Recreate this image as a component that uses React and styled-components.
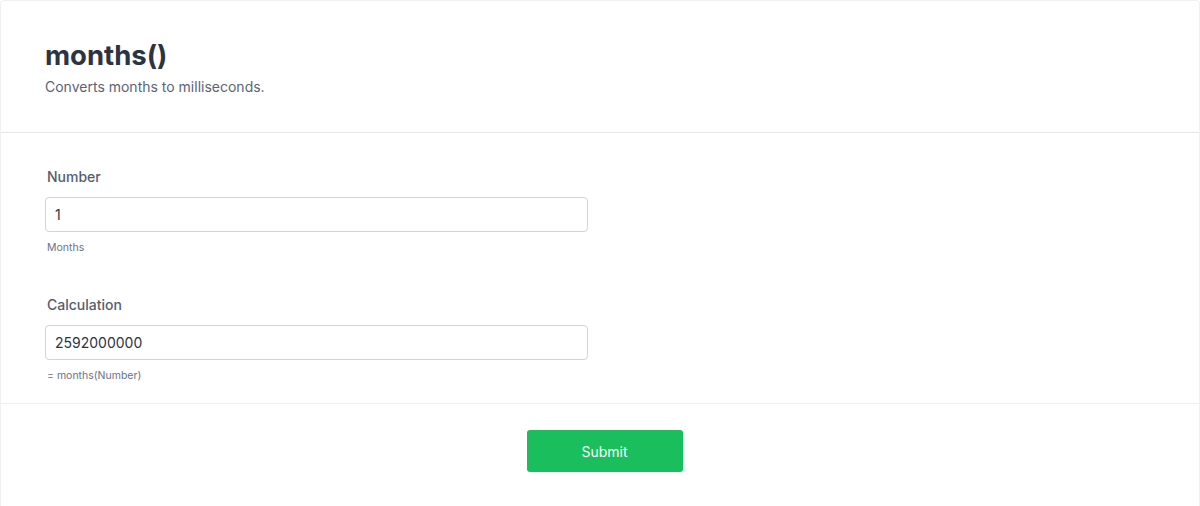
import React, { useState } from 'react';
import styled, { createGlobalStyle } from 'styled-components';

const GlobalStyle = createGlobalStyle`
  * { box-sizing: border-box; }
  body {
    margin: 0;
    background: #fff;
    font-family: Inter, "Liberation Sans", Arial, sans-serif;
  }
`;

const App = () => {
  const [number, setNumber] = useState('1');
  const n = parseFloat(number);
  const calc = isNaN(n) ? '' : String(n * 30 * 24 * 60 * 60 * 1000);

  return (
    <>
      <GlobalStyle />
      <Card>
        <Header>
          <Title>months()</Title>
          <Subtitle>Converts months to milliseconds.</Subtitle>
        </Header>
        <Body>
          <Field>
            <Label>Number</Label>
            <Input value={number} onChange={(e) => setNumber(e.target.value)} />
            <Help>Months</Help>
          </Field>
          <Field>
            <Label>Calculation</Label>
            <Input value={calc} readOnly />
            <Help>= months(Number)</Help>
          </Field>
        </Body>
        <Footer>
          <Button type="button">Submit</Button>
        </Footer>
      </Card>
    </>
  );
};

export default App;

const Card = styled.div`
  width: 1200px;
  min-height: 540px;
  border: 1px solid #eef0f3;
  border-radius: 4px;
  background: #fff;
`;

const Header = styled.div`
  padding: 36px 44px 35px;
  border-bottom: 1px solid #e5e7eb;
`;

const Title = styled.h1`
  margin: 0;
  font-size: 27.5px;
  line-height: 36px;
  font-weight: 700;
  color: #2d3343;
`;

const Subtitle = styled.p`
  margin: 4px 0 0;
  font-size: 14px;
  line-height: 20px;
  color: #5b6474;
`;

const Body = styled.div`
  padding: 34px 44px 20px;
  border-bottom: 1px solid #eceef1;
  display: flex;
  flex-direction: column;
  gap: 40px;
`;

const Field = styled.div`
  width: 543px;
  display: flex;
  flex-direction: column;
`;

const Label = styled.label`
  padding-left: 2px;
  font-size: 14px;
  line-height: 20px;
  font-weight: 500;
  color: #555d6d;
  margin-bottom: 10px;
`;

const Input = styled.input`
  width: 100%;
  height: 35px;
  padding: 0 9px;
  border: 1px solid #cfd3da;
  border-radius: 4px;
  font-family: inherit;
  font-size: 14px;
  color: #2d3343;
  background: #fff;
  outline: none;
`;

const Help = styled.div`
  margin-top: 9px;
  padding-left: 2px;
  font-size: 10.5px;
  line-height: 14px;
  color: #6b7280;
`;

const Footer = styled.div`
  display: flex;
  justify-content: center;
  padding: 26px 0 0 9px;
`;

const Button = styled.button`
  width: 156px;
  height: 42px;
  border: none;
  border-radius: 3px;
  background: #1abe5c;
  color: #fff;
  font-family: inherit;
  font-size: 14px;
  cursor: pointer;
`;
